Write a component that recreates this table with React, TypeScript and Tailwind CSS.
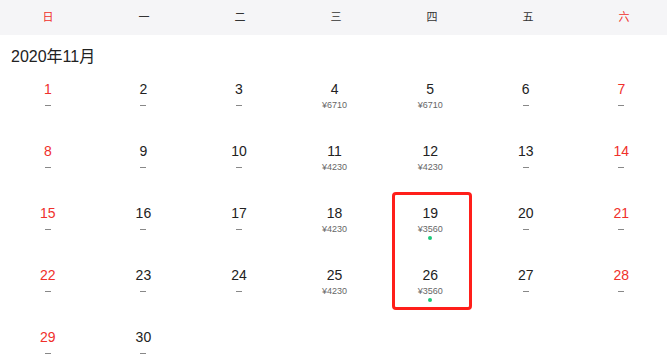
import React from "react";

const weekdays = ["日", "一", "二", "三", "四", "五", "六"];
const prices: Record<number, string> = {
  4: "¥6710",
  5: "¥6710",
  11: "¥4230",
  12: "¥4230",
  18: "¥4230",
  19: "¥3560",
  25: "¥4230",
  26: "¥3560",
};
const dots = new Set([19, 26]);

export default function App() {
  const days = Array.from({ length: 30 }, (_, i) => i + 1);
  return (
    <div
      className="w-[667px] h-[360px] overflow-hidden bg-white"
      style={{ fontFamily: '"Liberation Sans", "Noto Sans CJK SC", sans-serif' }}
    >
      <div className="grid grid-cols-[repeat(7,96px)] h-[35px] bg-[#f5f5f7] items-center">
        {weekdays.map((w, i) => (
          <div
            key={w}
            className={`text-center text-[11px] ${i === 0 || i === 6 ? "text-[#f0302b]" : "text-[#333]"}`}
          >
            {w}
          </div>
        ))}
      </div>
      <div className="h-[35px] pl-[11px] pt-[10px] text-[16px] leading-[24px] text-[#222]">2020年11月</div>
      <div className="grid grid-cols-[repeat(7,95.6px)] auto-rows-[62px]">
        {days.map((d, i) => {
          const col = i % 7;
          const weekend = col === 0 || col === 6;
          return (
            <div key={d} className="relative flex flex-col items-center pt-[9px]">
              {d === 19 && (
                <div className="absolute top-[-2px] left-[10px] w-[80px] h-[118px] border-[3px] border-[#ff1f1a] rounded-[4px]" />
              )}
              <div className={`text-[14px] leading-[20px] ${weekend ? "text-[#f0302b]" : "text-[#222]"}`}>{d}</div>
              <div className="h-[12px] flex items-center justify-center text-[9px] leading-[12px] text-[#666]">
                {prices[d] ? prices[d] : <span className="block w-[6px] h-[1px] bg-[#888]" />}
              </div>
              {dots.has(d) && <div className="mt-[1px] w-[4px] h-[4px] rounded-full bg-[#1dc87a]" />}
            </div>
          );
        })}
      </div>
    </div>
  );
}
